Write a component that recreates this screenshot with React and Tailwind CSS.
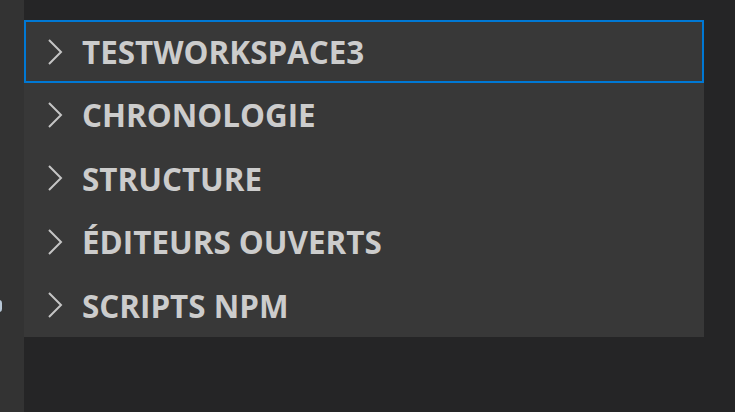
import React from "react";

const Chevron = () => (
  <svg width="20" height="28" viewBox="0 0 20 28" className="shrink-0">
    <path d="M4 2 L16 14 L4 26" fill="none" stroke="#c5c5c5" strokeWidth="2" />
  </svg>
);

const items = ["TESTWORKSPACE3", "CHRONOLOGIE", "STRUCTURE", "ÉDITEURS OUVERTS", "SCRIPTS NPM"];

export default function App() {
  return (
    <div className="w-[735px] h-[412px] bg-[#252526] flex overflow-hidden" style={{ fontFamily: '"Open Sans", "Noto Sans", sans-serif' }}>
      <div className="w-[24px] h-full bg-[#333333] relative">
        <div className="absolute left-[-4px] top-[300px] w-[6px] h-[12px] rounded-full bg-[#b8c7d6]" />
      </div>
      <div className="flex flex-col w-[680px] pt-[20px]">
        <div className="bg-[#383838] flex flex-col">
          {items.map((t, i) => (
            <div
              key={t}
              className={
                "h-[63.4px] flex items-center gap-[17px] " +
                (i === 0 ? "border-2 border-[#0078d4] pl-[19px]" : "pl-[21px]")
              }
            >
              <Chevron />
              <span className="text-[31.4px] font-bold text-[#cccccc] leading-none">{t}</span>
            </div>
          ))}
        </div>
      </div>
    </div>
  );
}
